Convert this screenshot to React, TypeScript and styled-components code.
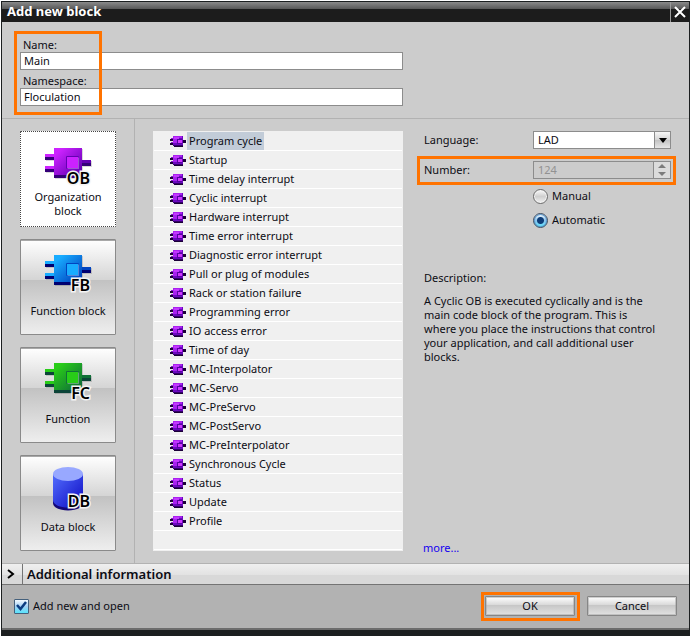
import React, { useState } from "react";
import styled, { createGlobalStyle, css } from "styled-components";

const GlobalStyle = createGlobalStyle`
  *, *::before, *::after { box-sizing: border-box; }
  body {
    margin: 0;
    background: #ffffff;
    color: #0c0c14;
    font-family: "Noto Sans", "Open Sans", sans-serif;
    font-size: 11px;
    line-height: 14px;
  }
  button, input, select { font: inherit; color: inherit; }
`;

const Dialog = styled.main`
  margin: 1px;
  border: 1px solid #1c1f20;
  border-bottom-width: 6px;
  background: #cccccc;
`;

const TitleBar = styled.header`
  display: flex;
  height: 20px;
  background: linear-gradient(#8a8a8a 0, #585858 7px, #1c1c1c 7px, #1c1c1c 100%);
`;

const Title = styled.h1`
  flex: 1;
  margin: 0;
  padding-left: 5px;
  color: #ffffff;
  font-size: 13px;
  font-weight: 700;
  line-height: 19px;
`;

const CloseButton = styled.button`
  display: grid;
  place-items: center;
  width: 19px;
  padding: 0;
  border: 0;
  border-left: 1px solid #9a9a9a;
  background: transparent;
`;

const highlight = css`
  content: "";
  position: absolute;
  border: 3px solid #ff7300;
  pointer-events: none;
`;

const NameForm = styled.section`
  position: relative;
  display: grid;
  grid-template-columns: minmax(0, 383px);
  padding: 16px 18px 12px;
  border-bottom: 1px solid #b2b2b2;
  &::after {
    ${highlight}
    left: 12px;
    top: 9px;
    width: 88px;
    height: 84px;
  }
`;

const FieldLabel = styled.label`
  padding-left: 3px;
  line-height: 14px;
  &:not(:first-child) { padding-top: 4px; }
`;

const TextField = styled.input`
  width: 100%;
  height: 18px;
  padding: 0 3px 2px;
  border: 1px solid #8c8c8c;
  border-radius: 0;
  background: #ffffff;
`;

const Body = styled.div`
  display: flex;
`;

const BlockTypes = styled.nav`
  display: flex;
  flex-direction: column;
  gap: 12px;
  padding: 12px 18px;
  border-right: 1px solid #b2b2b2;
`;

const Tile = styled.button<{ $selected?: boolean }>`
  display: flex;
  flex-direction: column;
  align-items: center;
  width: 96px;
  height: 96px;
  padding: ${(p) => (p.$selected ? "12px" : "11px")} 4px 0;
  border: ${(p) => (p.$selected ? "1px dotted #444444" : "1px solid #8a8a8a")};
  border-radius: 1px;
  background: ${(p) =>
    p.$selected
      ? "#ffffff"
      : "linear-gradient(#ffffff 0, #d4d4d4 43%, #c2c2c2 43%, #eeeeee 100%)"};
  box-shadow: ${(p) => (p.$selected ? "none" : "inset 0 1px 0 #a8a8a8")};
`;

const TileLabel = styled.span`
  display: flex;
  align-items: center;
  justify-content: center;
  height: 32px;
`;

const EventList = styled.ul`
  flex: 0 1 250px;
  margin: 12px 20px 12px 18px;
  padding: 1px;
  list-style: none;
  background: #f0f0f0;
`;

const EventRow = styled.li`
  height: 19px;
  border-bottom: 1px solid #ffffff;
`;

const EventButton = styled.button`
  display: flex;
  align-items: center;
  gap: 1px;
  height: 18px;
  padding: 0 0 0 16px;
  border: 0;
  background: transparent;
`;

const EventName = styled.span<{ $selected: boolean }>`
  padding: 0 2px;
  line-height: 18px;
  white-space: nowrap;
  background: ${(p) => (p.$selected ? "#c2ccd8" : "transparent")};
`;

const Details = styled.section`
  flex: 1;
  display: flex;
  flex-direction: column;
  min-width: 0;
  padding: 12px 12px 8px 0;
`;

const Setting = styled.div<{ $marked?: boolean }>`
  position: relative;
  display: grid;
  grid-template-columns: 109px 138px;
  align-items: center;
  height: 18px;
  margin-bottom: 12px;
  padding-left: 1px;
  ${(p) =>
    p.$marked &&
    css`
      &::after {
        ${highlight}
        inset: -5px 1px -6px -6px;
      }
    `}
`;

const ComboBox = styled.div`
  display: grid;
  height: 18px;
  > * { grid-area: 1 / 1; }
`;

const Select = styled.select`
  appearance: none;
  width: 100%;
  height: 18px;
  padding: 0 20px 0 4px;
  border: 1px solid #8c8c8c;
  border-radius: 0;
  background: #ffffff;
`;

const ComboArrow = styled.span`
  justify-self: end;
  display: grid;
  place-items: center;
  width: 17px;
  height: 18px;
  border: 1px solid #8c8c8c;
  background: linear-gradient(#f6f6f6, #d4d4d4 50%, #c2c2c2 50%, #e6e6e6);
  pointer-events: none;
`;

const Spinner = styled.div`
  display: flex;
  height: 18px;
  border: 1px solid #8c8c8c;
`;

const SpinnerInput = styled.input`
  flex: 1;
  min-width: 0;
  padding: 0 4px;
  border: 0;
  background: transparent;
  color: #929292;
`;

const SpinnerButtons = styled.div`
  display: flex;
  flex-direction: column;
  width: 17px;
  border-left: 1px solid #8c8c8c;
  background: #dcdcdc;
`;

const SpinnerButton = styled.button`
  flex: 1;
  display: grid;
  place-items: center;
  padding: 0;
  border: 0;
  background: transparent;
`;

const RadioGroup = styled.div`
  display: grid;
  gap: 8px;
  margin: -3px 0 43px 110px;
`;

const RadioLabel = styled.label`
  display: flex;
  align-items: center;
  gap: 4px;
  height: 16px;
`;

const Radio = styled.input`
  appearance: none;
  width: 15px;
  height: 15px;
  margin: 0;
  border: 1px solid #6c6c6c;
  border-radius: 50%;
  background: linear-gradient(#fafafa, #cfcfcf 50%, #f2f2f2);
  box-shadow: inset 0 0 0 1px #f4f4f4;
  &:checked {
    border-color: #3c4c60;
    background:
      radial-gradient(circle, #0c3c78 0, #0c3c78 3px, transparent 4px),
      linear-gradient(#ffffff, #8cc4ec 50%, #5ce4fc);
    box-shadow: inset 0 0 0 1px #5c9cd4;
  }
`;

const Heading = styled.h2`
  margin: 0 0 9px 1px;
  font-size: 11px;
  font-weight: 400;
  line-height: 14px;
`;

const Description = styled.p`
  max-width: 236px;
  margin: 0 0 0 1px;
`;

const MoreLink = styled.a`
  align-self: flex-start;
  margin-top: auto;
  color: #1400f0;
  text-decoration: none;
`;

const InfoBar = styled.section`
  display: flex;
  height: 22px;
  border-top: 1px solid #b2b2b2;
  border-bottom: 1px solid #747474;
  background: linear-gradient(#efefef, #e2e2e2 11px, #d8d8d8 11px);
`;

const ExpandButton = styled.button`
  display: grid;
  place-items: center;
  width: 21px;
  padding: 0 3px 0 0;
  border: 0;
  border-right: 1px solid #747474;
  background: transparent;
`;

const InfoTitle = styled.h2`
  margin: 0;
  padding-left: 4px;
  font-size: 13px;
  font-weight: 600;
  line-height: 20px;
`;

const Footer = styled.footer`
  display: flex;
  align-items: center;
  gap: 12px;
  height: 45px;
  padding: 0 12px 1px;
  border-bottom: 2px solid #6c6c6c;
  background: #b2b2b2;
`;

const CheckLabel = styled.label`
  display: flex;
  align-items: center;
  gap: 4px;
  margin-right: auto;
`;

const CheckBox = styled.span`
  display: grid;
  place-items: center;
  > * { grid-area: 1 / 1; }
  > svg { pointer-events: none; }
  > input:not(:checked) + svg { visibility: hidden; }
`;

const CheckInput = styled.input`
  appearance: none;
  width: 15px;
  height: 15px;
  margin: 0;
  border: 1px solid #44607c;
  border-radius: 1px;
  background: linear-gradient(#f4faff, #a4d0f4 50%, #58e4fc);
`;

const ActionFrame = styled.div<{ $marked?: boolean }>`
  position: relative;
  ${(p) =>
    p.$marked &&
    css`
      &::after {
        ${highlight}
        inset: -4px -5px -5px -4px;
      }
    `}
`;

const ActionButton = styled.button`
  display: block;
  width: 90px;
  height: 20px;
  padding: 0;
  border: 1px solid #868686;
  border-radius: 1px;
  background: linear-gradient(#ffffff, #d8d8d8 45%, #c6c6c6 45%, #e2e2e2);
  box-shadow: inset 0 0 0 1px rgba(160, 160, 160, 0.5);
`;

interface ChipColors {
  light: string;
  deep: string;
  edge: string;
}

const colors: Record<string, ChipColors> = {
  OB: { light: "#cc22ff", deep: "#6400b4", edge: "#340078" },
  FB: { light: "#18acff", deep: "#0044c0", edge: "#000070" },
  FC: { light: "#28cc18", deep: "#107038", edge: "#0c4438" },
};

const Tag = ({ text, x }: { text: string; x: number }) => (
  <text
    x={x}
    y="40"
    textAnchor="end"
    fontFamily="Noto Sans, sans-serif"
    fontSize="16"
    fontWeight="600"
    fill="#000000"
    stroke="#f4f4f4"
    strokeWidth="3"
    paintOrder="stroke"
  >
    {text}
  </text>
);

const ChipIcon = ({ kind }: { kind: string }) => {
  const c = colors[kind];
  return (
    <svg width="52" height="44" viewBox="-1 0 52 44" aria-hidden="true">
      <defs>
        <linearGradient id={`chip-${kind}`} x1="0" y1="0" x2="1" y2="1">
          <stop offset="0.15" stopColor={c.light} />
          <stop offset="0.9" stopColor={c.deep} />
        </linearGradient>
      </defs>
      <path d="M12 5h28v12h9v6h-9v12H12zM3 11h9v6H3zM3 23h9v6H3z" fill="#000000" opacity="0.15" />
      <path d="M2 10h9v3H2zM2 22h9v3H2z" fill={c.light} />
      <path d="M2 13h9v3H2zM2 25h9v3H2zM39 19h9v3h-9zM11 31h28v3H11z" fill={c.edge} />
      <path d="M39 16h9v3h-9z" fill={c.deep} />
      <path d="M11 4h28v27H11z" fill={`url(#chip-${kind})`} />
      <path d="M23.500 12.500h12v12h-12z" fill={c.light} stroke={c.deep} />
      <path d="M24.500 24.500h11v-11" fill="none" stroke="#ffffff" opacity="0.35" />
      <Tag text={kind} x={47} />
    </svg>
  );
};

const DataIcon = () => (
  <svg width="52" height="44" viewBox="-1 0 52 44" aria-hidden="true">
    <defs>
      <linearGradient id="data-side" x1="0" y1="0" x2="1" y2="1">
        <stop offset="0.1" stopColor="#4c64f8" />
        <stop offset="0.9" stopColor="#1414c8" />
      </linearGradient>
    </defs>
    <path d="M10 7v29c0 10 30 10 30 0V7z" fill="#140878" />
    <path d="M10 7v26c0 10 30 10 30 0V7z" fill="url(#data-side)" />
    <ellipse cx="25" cy="7" rx="15" ry="7" fill="#98a8ff" />
    <Tag text="DB" x={47} />
  </svg>
);

const MiniChip = () => (
  <svg width="16" height="12" viewBox="0 0 16 12" shapeRendering="crispEdges" aria-hidden="true">
    <path d="M4 11h9v1H4zM0 4h4v2H0zM0 8h4v2H0zM13 5h3v3h-3z" fill="#1c0038" />
    <path d="M1 3h3v1H1zM1 7h3v1H1z" fill="#8c18d0" />
    <path d="M3 1h10v10H3z" fill="#6c08c0" />
    <path d="M3 1h9v2H3zM3 3h4v5H3z" fill="#a820f0" />
    <path d="M4 2h5v2H4z" fill="#c438ff" />
    <path d="M7 4h5v5H7z" fill="#5404a0" />
    <path d="M8 5h4v3H8z" fill="#d038ff" />
    <path d="M3 10h10v1H3z" fill="#34006c" />
  </svg>
);

const blockTypes = [
  { kind: "OB", label: "Organization block" },
  { kind: "FB", label: "Function block" },
  { kind: "FC", label: "Function" },
  { kind: "DB", label: "Data block" },
];

const events = [
  "Program cycle",
  "Startup",
  "Time delay interrupt",
  "Cyclic interrupt",
  "Hardware interrupt",
  "Time error interrupt",
  "Diagnostic error interrupt",
  "Pull or plug of modules",
  "Rack or station failure",
  "Programming error",
  "IO access error",
  "Time of day",
  "MC-Interpolator",
  "MC-Servo",
  "MC-PreServo",
  "MC-PostServo",
  "MC-PreInterpolator",
  "Synchronous Cycle",
  "Status",
  "Update",
  "Profile",
];

export default function App() {
  const [kind, setKind] = useState("OB");
  const [event, setEvent] = useState("Program cycle");
  const [mode, setMode] = useState("Automatic");

  return (
    <>
      <GlobalStyle />
      <Dialog>
        <TitleBar>
          <Title>Add new block</Title>
          <CloseButton aria-label="Close">
            <svg width="12" height="12" viewBox="0 0 12 12">
              <path d="M1 1l10 10M11 1L1 11" stroke="#ffffff" strokeWidth="2" />
            </svg>
          </CloseButton>
        </TitleBar>

        <NameForm>
          <FieldLabel htmlFor="name">Name:</FieldLabel>
          <TextField id="name" defaultValue="Main" />
          <FieldLabel htmlFor="namespace">Namespace:</FieldLabel>
          <TextField id="namespace" defaultValue="Floculation" />
        </NameForm>

        <Body>
          <BlockTypes aria-label="Block type">
            {blockTypes.map((type) => (
              <Tile
                key={type.kind}
                $selected={type.kind === kind}
                aria-pressed={type.kind === kind}
                onClick={() => setKind(type.kind)}
              >
                {type.kind === "DB" ? <DataIcon /> : <ChipIcon kind={type.kind} />}
                <TileLabel>{type.label}</TileLabel>
              </Tile>
            ))}
          </BlockTypes>

          <EventList>
            {events.map((name) => (
              <EventRow key={name}>
                <EventButton aria-pressed={name === event} onClick={() => setEvent(name)}>
                  <MiniChip />
                  <EventName $selected={name === event}>{name}</EventName>
                </EventButton>
              </EventRow>
            ))}
            <EventRow />
          </EventList>

          <Details>
            <Setting>
              <label htmlFor="language">Language:</label>
              <ComboBox>
                <Select id="language" defaultValue="LAD">
                  <option>LAD</option>
                </Select>
                <ComboArrow>
                  <svg width="8" height="5" viewBox="0 0 8 5">
                    <path d="M0 0h8L4 5z" fill="#000000" />
                  </svg>
                </ComboArrow>
              </ComboBox>
            </Setting>
            <Setting $marked>
              <label htmlFor="number">Number:</label>
              <Spinner>
                <SpinnerInput id="number" defaultValue="124" disabled />
                <SpinnerButtons>
                  <SpinnerButton aria-label="Increase" disabled>
                    <svg width="8" height="4" viewBox="0 0 8 4">
                      <path d="M0 4h8L4 0z" fill="#7c7c7c" />
                    </svg>
                  </SpinnerButton>
                  <SpinnerButton aria-label="Decrease" disabled>
                    <svg width="8" height="4" viewBox="0 0 8 4">
                      <path d="M0 0h8L4 4z" fill="#7c7c7c" />
                    </svg>
                  </SpinnerButton>
                </SpinnerButtons>
              </Spinner>
            </Setting>
            <RadioGroup role="radiogroup" aria-label="Numbering">
              {["Manual", "Automatic"].map((option) => (
                <RadioLabel key={option}>
                  <Radio
                    type="radio"
                    name="numbering"
                    checked={mode === option}
                    onChange={() => setMode(option)}
                  />
                  {option}
                </RadioLabel>
              ))}
            </RadioGroup>
            <Heading>Description:</Heading>
            <Description>
              A Cyclic OB is executed cyclically and is the main code block of the program. This is
              where you place the instructions that control your application, and call additional
              user blocks.
            </Description>
            <MoreLink href="#more">more...</MoreLink>
          </Details>
        </Body>

        <InfoBar>
          <ExpandButton aria-label="Expand additional information">
            <svg width="8" height="10" viewBox="0 0 8 10">
              <path d="M1 1l5 4-5 4" fill="none" stroke="#000000" strokeWidth="2" />
            </svg>
          </ExpandButton>
          <InfoTitle>Additional information</InfoTitle>
        </InfoBar>

        <Footer>
          <CheckLabel>
            <CheckBox>
              <CheckInput type="checkbox" defaultChecked />
              <svg width="11" height="10" viewBox="0 0 11 10">
                <path d="M1 4l3.500 4L10 1" fill="none" stroke="#0c3c80" strokeWidth="2.500" />
              </svg>
            </CheckBox>
            Add new and open
          </CheckLabel>
          <ActionFrame $marked>
            <ActionButton>OK</ActionButton>
          </ActionFrame>
          <ActionFrame>
            <ActionButton>Cancel</ActionButton>
          </ActionFrame>
        </Footer>
      </Dialog>
    </>
  );
}
